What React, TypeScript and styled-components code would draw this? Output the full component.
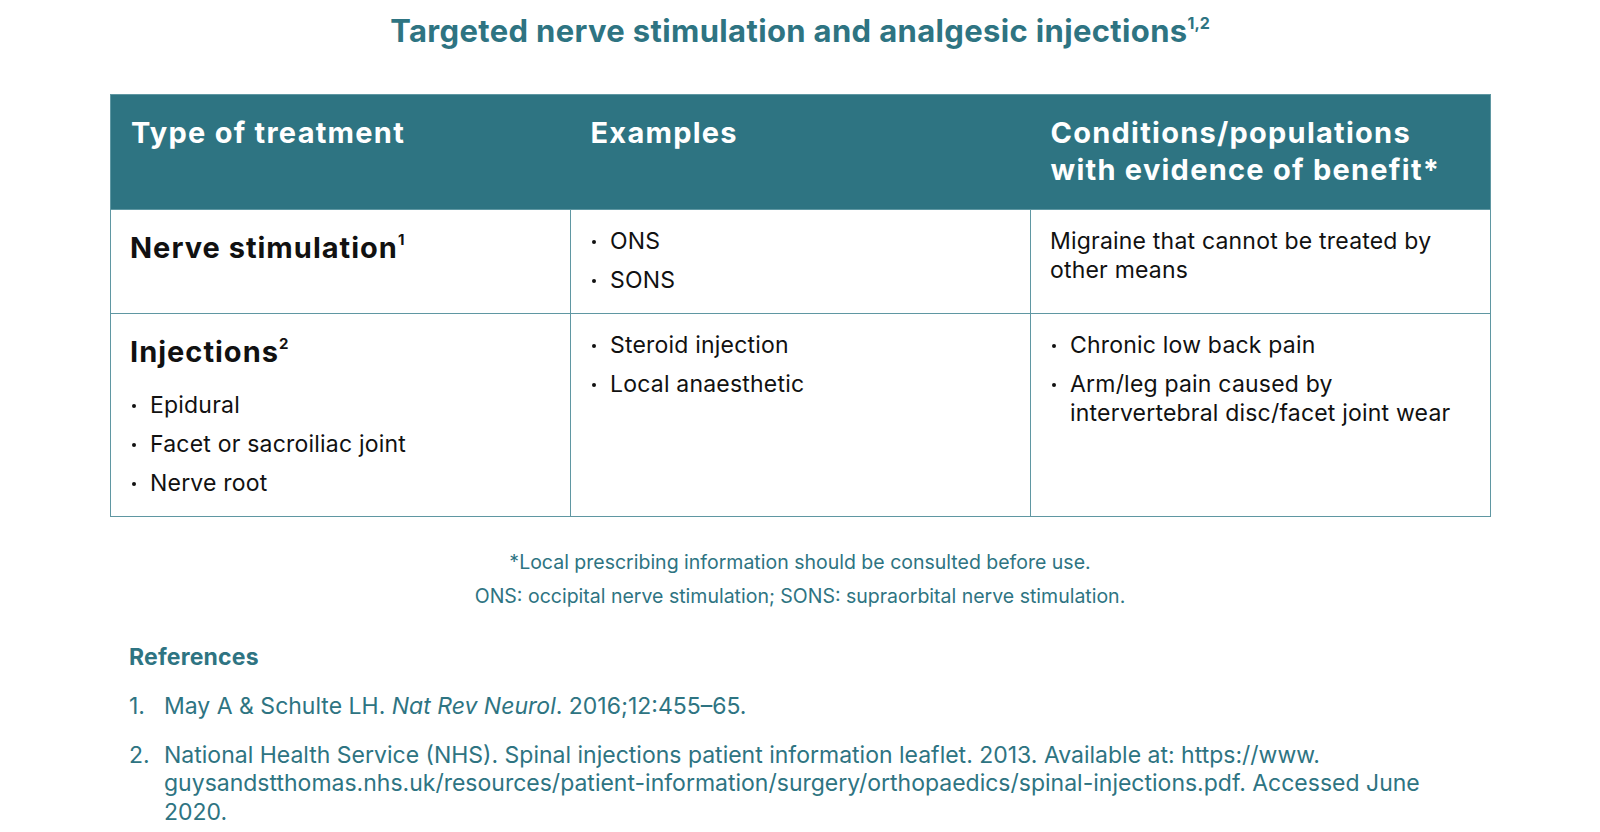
import React from "react";
import styled, { createGlobalStyle } from "styled-components";

const TEAL = "#2e7482";
const BORDER = "#5f97a2";

const Global = createGlobalStyle`
  html, body { margin: 0; padding: 0; background: #ffffff; }
  body { font-family: Inter, "Liberation Sans", Arial, sans-serif; color: #111; }
  * { box-sizing: border-box; }
`;

const Page = styled.div`
  width: 1600px;
  padding: 12px 110px 0 110px;
  display: flex;
  flex-direction: column;
`;

const Title = styled.h1`
  margin: 0;
  text-align: center;
  font-size: 31px;
  line-height: 38px;
  font-weight: 700;
  color: ${TEAL};
  letter-spacing: 0.35px;
`;

const Sup = styled.sup<{ $size?: number }>`
  font-size: ${(p) => p.$size ?? 16}px;
  line-height: 0;
  letter-spacing: 0;
  vertical-align: super;
  position: relative;
  top: -2px;
`;

const Table = styled.table`
  margin-top: 44px;
  width: 1380px;
  border-collapse: collapse;
  table-layout: fixed;
  border: 1px solid ${BORDER};
`;

const HeadCell = styled.th`
  background: ${TEAL};
  color: #ffffff;
  text-align: left;
  vertical-align: top;
  padding: 19px 20px 21px 20px;
  font-size: 29px;
  line-height: 37px;
  font-weight: 700;
  letter-spacing: 1.25px;
  width: 460px;
`;

const Cell = styled.td`
  vertical-align: top;
  padding: 17px 20px 18px 19px;
  border: 1px solid ${BORDER};
  font-size: 23px;
  line-height: 29px;
  letter-spacing: 0.2px;
  color: #111;
`;

const RowHeading = styled.div`
  margin-top: 1px;
  font-size: 29px;
  line-height: 40px;
  font-weight: 700;
  letter-spacing: 1px;
  color: #111;
`;

const Bullets = styled.ul<{ $top?: number }>`
  list-style: none;
  margin: ${(p) => p.$top ?? 0}px 0 0 0;
  padding: 0;
  display: flex;
  flex-direction: column;
  gap: 10px;
`;

const Bullet = styled.li`
  position: relative;
  padding-left: 20px;
  &::before {
    content: "";
    position: absolute;
    left: 2px;
    top: 13px;
    width: 4px;
    height: 4px;
    border-radius: 50%;
    background: #111;
  }
`;

const Notes = styled.div`
  margin-top: 28px;
  text-align: center;
  color: ${TEAL};
  font-size: 19.5px;
  line-height: 34px;
`;

const RefSection = styled.section`
  margin-top: 29px;
  padding-left: 19px;
  color: ${TEAL};
`;

const RefHeading = styled.h2`
  margin: 0;
  font-size: 23px;
  line-height: 30px;
  font-weight: 700;
  letter-spacing: 0.2px;
`;

const RefList = styled.ol`
  list-style: none;
  margin: 20px 0 0 0;
  padding: 0;
  display: flex;
  flex-direction: column;
  gap: 20px;
`;

const RefItem = styled.li`
  display: grid;
  grid-template-columns: 35px 1fr;
  font-size: 23px;
  line-height: 28.5px;
  padding-right: 20px;
`;

export default function App() {
  return (
    <>
      <Global />
      <Page>
        <Title>
          Targeted nerve stimulation and analgesic injections<Sup>1,2</Sup>
        </Title>
        <Table>
          <thead>
            <tr>
              <HeadCell>Type of treatment</HeadCell>
              <HeadCell>Examples</HeadCell>
              <HeadCell>
                Conditions/populations
                <br />
                with evidence of benefit*
              </HeadCell>
            </tr>
          </thead>
          <tbody>
            <tr>
              <Cell>
                <RowHeading>
                  Nerve stimulation<Sup $size={15}>1</Sup>
                </RowHeading>
              </Cell>
              <Cell>
                <Bullets>
                  <Bullet>ONS</Bullet>
                  <Bullet>SONS</Bullet>
                </Bullets>
              </Cell>
              <Cell>
                Migraine that cannot be treated by
                <br />
                other means
              </Cell>
            </tr>
            <tr>
              <Cell>
                <RowHeading>
                  Injections<Sup $size={15}>2</Sup>
                </RowHeading>
                <Bullets $top={19}>
                  <Bullet>Epidural</Bullet>
                  <Bullet>Facet or sacroiliac joint</Bullet>
                  <Bullet>Nerve root</Bullet>
                </Bullets>
              </Cell>
              <Cell>
                <Bullets>
                  <Bullet>Steroid injection</Bullet>
                  <Bullet>Local anaesthetic</Bullet>
                </Bullets>
              </Cell>
              <Cell>
                <Bullets>
                  <Bullet>Chronic low back pain</Bullet>
                  <Bullet>
                    Arm/leg pain caused by
                    <br />
                    intervertebral disc/facet joint wear
                  </Bullet>
                </Bullets>
              </Cell>
            </tr>
          </tbody>
        </Table>
        <Notes>
          <div>*Local prescribing information should be consulted before use.</div>
          <div>ONS: occipital nerve stimulation; SONS: supraorbital nerve stimulation.</div>
        </Notes>
        <RefSection>
          <RefHeading>References</RefHeading>
          <RefList>
            <RefItem>
              <span>1.</span>
              <span>
                May A &amp; Schulte LH. <i>Nat Rev Neurol</i>. 2016;12:455–65.
              </span>
            </RefItem>
            <RefItem>
              <span>2.</span>
              <span>
                National Health Service (NHS). Spinal injections patient information leaflet. 2013. Available at: https://www.
                <br />
                guysandstthomas.nhs.uk/resources/patient-information/surgery/orthopaedics/spinal-injections.pdf. Accessed June
                <br />
                2020.
              </span>
            </RefItem>
          </RefList>
        </RefSection>
      </Page>
    </>
  );
}
